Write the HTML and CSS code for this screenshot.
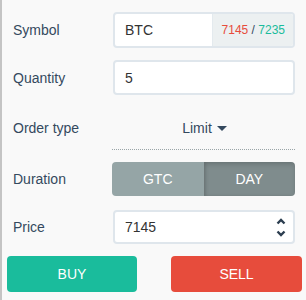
FILE: index.html
```
<!DOCTYPE html>
<html lang="en">
<head>
    <meta charset="UTF-8">
    <meta name="viewport" content="width=device-width, initial-scale=1.0">
    <title>Order Ticket</title>
    <link rel="stylesheet" href="styles.css">
</head>
<body>
    <div class="ticket">
        <div class="row">
            <label class="label">Symbol</label>
            <div class="field input-group">
                <span class="value">BTC</span>
                <span class="addon"><span><span class="bid">7145</span> / <span class="ask">7235</span></span></span>
            </div>
        </div>

        <div class="row">
            <label class="label">Quantity</label>
            <div class="field">
                <span class="value">5</span>
            </div>
        </div>

        <div class="row row-select">
            <label class="label">Order type</label>
            <div class="select">Limit <span class="caret"></span></div>
        </div>

        <div class="row">
            <label class="label">Duration</label>
            <div class="toggle">
                <button class="toggle-btn">GTC</button>
                <button class="toggle-btn active">DAY</button>
            </div>
        </div>

        <div class="row row-price">
            <label class="label">Price</label>
            <div class="field field-number">
                <span class="value">7145</span>
                <span class="spinner">
                    <svg width="10" height="7" viewBox="0 0 10 7"><path d="M1.5 5.5 L5 2 L8.5 5.5" fill="none" stroke="#2c3e50" stroke-width="2.4"/></svg>
                    <svg width="10" height="7" viewBox="0 0 10 7"><path d="M1.5 1.5 L5 5 L8.5 1.5" fill="none" stroke="#2c3e50" stroke-width="2.4"/></svg>
                </span>
            </div>
        </div>

        <div class="actions">
            <button class="btn btn-buy">BUY</button>
            <button class="btn btn-sell">SELL</button>
        </div>
    </div>
</body>
</html>
```
FILE: styles.css
```
html, body {
    margin: 0;
    padding: 0;
}
body {
    font-family: "Liberation Sans", Arial, sans-serif;
    font-size: 14px;
    background-color: #f9f9f9;
    color: #34495e;
    border-left: 2px solid #c4c4c4;
    height: 300px;
    box-sizing: border-box;
}
.ticket {
    padding: 12px 4px 0 5px;
}
.row {
    display: flex;
    align-items: center;
    padding: 0 7px 0 6px;
    margin-bottom: 12px;
}
.label {
    width: 100px;
    flex: none;
}
.field {
    flex: 1;
    display: flex;
    align-items: center;
    height: 35px;
    box-sizing: border-box;
    border: 2px solid #dfe6ec;
    border-radius: 4px;
    background-color: #fff;
    color: #333;
}
.value {
    flex: 1;
    padding-left: 10px;
}
.input-group {
    height: 36px;
    overflow: hidden;
}
.addon {
    align-self: stretch;
    display: flex;
    align-items: center;
    padding: 0 8px 0 9px;
    background-color: #ecf0f1;
    border-left: 1px solid #e4eaee;
    font-size: 12px;
    color: #34495e;
}
.bid {
    color: #e74c3c;
}
.ask {
    color: #1abc9c;
}
.row-select {
    margin-top: -1px;
}
.select {
    flex: 1;
    height: 43px;
    display: flex;
    align-items: center;
    justify-content: center;
    border-bottom: 1px dotted #9aa5a8;
    margin-left: -1px;
    padding-left: 2px;
}
.caret {
    display: inline-block;
    margin-left: 5px;
    border-top: 5px solid #34495e;
    border-left: 5px solid transparent;
    border-right: 5px solid transparent;
    margin-top: 2px;
}
.toggle {
    flex: 1;
    display: flex;
    height: 34px;
    border-radius: 4px;
    overflow: hidden;
    margin-left: -1px;
}
.toggle-btn {
    flex: 1;
    border: none;
    font-family: inherit;
    font-size: 14px;
    color: #fff;
    background-color: #95a5a6;
    padding: 0;
}
.toggle-btn.active {
    background-color: #7f8c8d;
    box-shadow: inset 0 3px 5px rgba(0,0,0,0.125), inset 2px 0 3px rgba(0,0,0,0.1);
}
.row-price {
    margin-top: 14px;
}
.field-number {
    height: 34px;
}
.spinner {
    display: flex;
    flex-direction: column;
    gap: 5px;
    padding-right: 7px;
}
.spinner svg {
    display: block;
}
.actions {
    display: flex;
    justify-content: space-between;
}
.btn {
    width: 130px;
    height: 36px;
    border: none;
    border-radius: 4px;
    font-family: inherit;
    font-size: 14px;
    color: #fff;
    padding: 0;
}
.btn-buy {
    background-color: #1abc9c;
}
.btn-sell {
    width: 131px;
    background-color: #e74c3c;
}
```
